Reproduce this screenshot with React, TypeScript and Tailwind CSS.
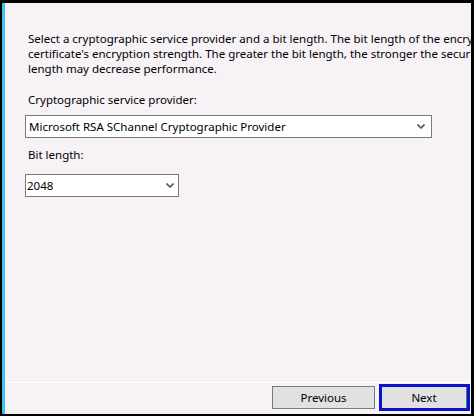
export default function App() {
  const font = { fontFamily: '"Segoe UI", "Noto Sans", Lato, sans-serif' }
  return (
    <div className="w-[474px] h-[416px] bg-black pt-[3px] pl-[2px] pr-[3px] pb-[2px] overflow-hidden">
      <div className="flex h-full">
        <div className="w-[3px] bg-[#38c4ee]" />
        <div className="flex-1 flex flex-col bg-[#f6f2f6] text-[11.5px] leading-[15px] text-black overflow-hidden" style={font}>
          <div className="flex-1 pl-[20px] pt-[28px]">
            <div className="pl-[3px] whitespace-nowrap">
              <div>Select a cryptographic service provider and a bit length. The bit length of the encryption key determines the</div>
              <div>certificate's encryption strength. The greater the bit length, the stronger the security. However, a greater bit</div>
              <div>length may decrease performance.</div>
            </div>

            <div className="pl-[3px] mt-[16px]">Cryptographic service provider:</div>
            <div className="mt-[8px] w-[407px] h-[23px] border border-[#7a7a7a] bg-white flex items-center pl-[3px] pr-[6px]">
              <span className="flex-1 whitespace-nowrap">Microsoft RSA SChannel Cryptographic Provider</span>
              <Chevron />
            </div>

            <div className="pl-[3px] mt-[9px]">Bit length:</div>
            <div className="mt-[12px] w-[154px] h-[23px] border border-[#7a7a7a] bg-white flex items-center pl-[1px] pr-[4px]">
              <span className="flex-1">2048</span>
              <Chevron />
            </div>
          </div>

          <div className="h-px bg-white" />
          <div className="h-[31px] flex items-start justify-end pr-[1px]">
            <button className="mt-[3px] w-[103px] h-[23px] border border-[#7a7a7a] bg-[#e1e1e1] text-[11.5px]" style={font}>
              Previous
            </button>
            <div className="ml-[4px] mt-[1px] w-[91px] h-[27px] border-[3px] border-[#0a14cc]">
              <button className="w-full h-full bg-[#e1e1e1] border-r border-[#4a7a8a] text-[11.5px]" style={font}>
                Next
              </button>
            </div>
          </div>
        </div>
      </div>
    </div>
  )
}

function Chevron() {
  return (
    <svg width="8" height="5" viewBox="0 0 8 5" className="shrink-0">
      <path d="M0.5 0.5 L4 4 L7.5 0.5" fill="none" stroke="#555" strokeWidth="1.6" />
    </svg>
  )
}
